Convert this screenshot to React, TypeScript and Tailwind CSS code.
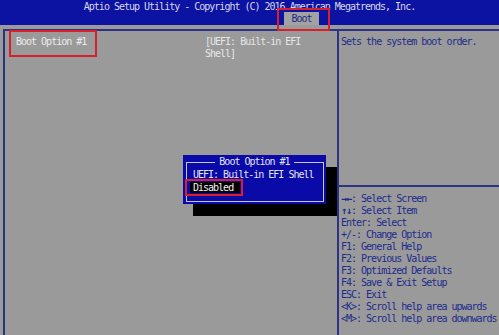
import React from "react";

const helpLines: React.ReactNode[] = [
  <><span className="font-bold">→←</span>: Select Screen</>,
  <><span className="font-bold">↑↓</span>: Select Item</>,
  <>Enter: Select</>,
  <>+/-: Change Option</>,
  <>F1: General Help</>,
  <>F2: Previous Values</>,
  <>F3: Optimized Defaults</>,
  <>F4: Save &amp; Exit Setup</>,
  <>ESC: Exit</>,
  <>&lt;K&gt;: Scroll help area upwards</>,
  <>&lt;M&gt;: Scroll help area downwards</>,
];

export default function App() {
  return (
    <div
      className="relative w-[499px] h-[335px] overflow-hidden flex flex-col bg-[#9a9a9a] text-[10px] leading-[12px] tracking-[-1px] whitespace-pre"
      style={{ fontFamily: '"DejaVu Sans Mono", "Liberation Mono", monospace' }}
    >
      {/* Header */}
      <div className="h-[25px] bg-[#0c12a2] flex flex-col">
        <div className="h-[12px] pt-[1px] text-center text-[#d6d8ea] leading-[11px]">
          Aptio Setup Utility - Copyright (C) 2016 American Megatrends, Inc.
        </div>
        <div className="flex pl-[284px]">
          <div className="w-[35px] h-[13px] bg-[#a2a2a2] text-[#1c2a86] text-center leading-[13px]">
            Boot
          </div>
        </div>
      </div>

      {/* Main frame */}
      <div className="flex-1 pt-[4px] pl-[3px]">
        <div className="h-full flex border-l-2 border-t-2 border-[#2c3284]">
          <div className="w-[332px] pt-[5px] pl-[11px]">
            <div className="flex">
              <div className="w-[189px] text-[#ececec]">Boot Option #1</div>
              <div className="text-[#e6e6e6]">
                <div>[UEFI: Built-in EFI</div>
                <div>Shell]</div>
              </div>
            </div>
          </div>
          <div className="flex-1 flex flex-col border-l-2 border-[#2c3284]">
            <div className="h-[154px] pt-[5px] pl-[2px] text-[#1e2a8c]">
              Sets the system boot order.
            </div>
            <div className="border-t-2 border-[#2c3284] pt-[6px] pl-[2px] text-[#1e2a8c]">
              {helpLines.map((l, i) => (
                <div key={i}>{l}</div>
              ))}
            </div>
          </div>
        </div>
      </div>

      {/* Popup shadow */}
      <div className="absolute left-[193px] top-[167px] w-[144px] h-[49px] bg-black" />
      {/* Popup */}
      <div className="absolute left-[183px] top-[155px] w-[143px] h-[49px] bg-[#0a0aa8]">
        <div className="absolute left-[3px] top-[7px] right-[2px] bottom-[2px] border border-[#c8c8dc]" />
        <div className="absolute left-0 right-0 top-[1px] flex justify-center">
          <span className="bg-[#0a0aa8] px-[4px] text-[#e4e4f0]">Boot Option #1</span>
        </div>
        <div className="absolute left-[10px] top-[14px] text-[#e4e4f0]">UEFI: Built-in EFI Shell</div>
        <div className="absolute left-[7px] top-[27px] w-[50px] h-[11px] bg-black text-[#f0f0f0] pl-[3px] leading-[11px]">
          Disabled
        </div>
      </div>

      {/* Red annotation boxes */}
      <div className="absolute left-[9px] top-[30px] w-[88px] h-[27px] border-2 border-[#d8202a]" />
      <div className="absolute left-[277px] top-[8px] w-[53px] h-[23px] border-2 border-[#d8202a]" />
      <div className="absolute left-[185px] top-[179px] w-[58px] h-[17px] border-2 border-[#d8202a]" />
    </div>
  );
}
